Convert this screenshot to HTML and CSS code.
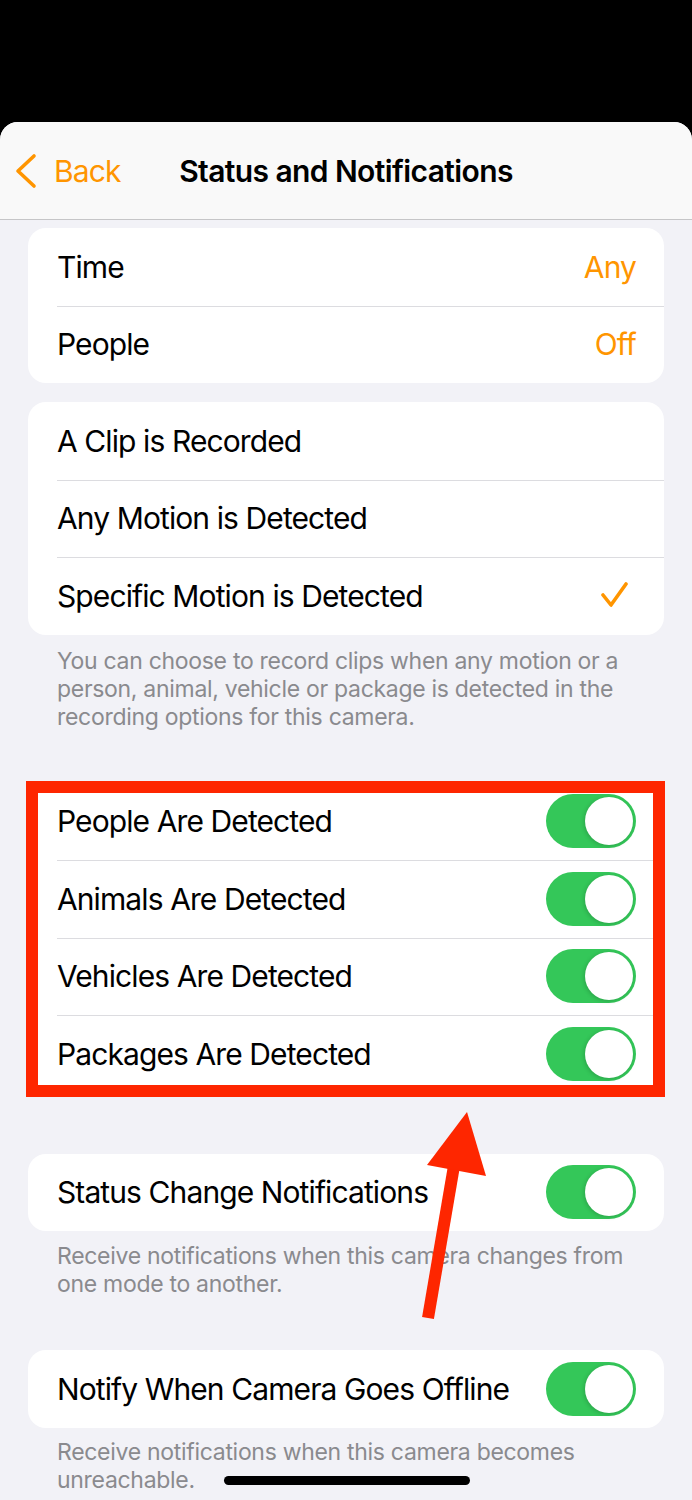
FILE: index.html
```html
<!DOCTYPE html>
<html lang="en">
<head>
<meta charset="utf-8">
<title>Status and Notifications</title>
<link rel="stylesheet" href="styles.css">
</head>
<body>
<div class="status-area"></div>
<div class="sheet">
  <header class="navbar">
    <a class="back" href="#">
      <svg class="chevron" width="24" height="36" viewBox="0 0 24 36"><path d="M20 3 L4 18 L20 33" fill="none" stroke="#ff9500" stroke-width="3.6" stroke-linecap="round" stroke-linejoin="round"/></svg>
      <span>Back</span>
    </a>
    <h1 class="title">Status and Notifications</h1>
    <div class="spacer"></div>
  </header>

  <main class="content">
    <section class="group g1">
      <div class="row"><span class="label">Time</span><span class="value">Any</span></div>
      <div class="row"><span class="label">People</span><span class="value">Off</span></div>
    </section>

    <section class="group g2">
      <div class="row"><span class="label">A Clip is Recorded</span></div>
      <div class="row"><span class="label">Any Motion is Detected</span></div>
      <div class="row"><span class="label">Specific Motion is Detected</span>
        <svg class="check" width="30" height="28" viewBox="0 0 30 28"><path d="M3 13 L11 23 L26 2" fill="none" stroke="#ff9500" stroke-width="3.6" stroke-linecap="round" stroke-linejoin="round"/></svg>
      </div>
    </section>
    <p class="footer f2">You can choose to record clips when any motion or a person, animal, vehicle or package is detected in the recording options for this camera.</p>

    <section class="group g3">
      <div class="row"><span class="label">People Are Detected</span><span class="toggle"><span class="knob"></span></span></div>
      <div class="row"><span class="label">Animals Are Detected</span><span class="toggle"><span class="knob"></span></span></div>
      <div class="row"><span class="label">Vehicles Are Detected</span><span class="toggle"><span class="knob"></span></span></div>
      <div class="row"><span class="label">Packages Are Detected</span><span class="toggle"><span class="knob"></span></span></div>
    </section>

    <section class="group g4">
      <div class="row"><span class="label">Status Change Notifications</span><span class="toggle"><span class="knob"></span></span></div>
    </section>
    <p class="footer f4">Receive notifications when this camera changes from one mode to another.</p>

    <section class="group g5">
      <div class="row"><span class="label">Notify When Camera Goes Offline</span><span class="toggle"><span class="knob"></span></span></div>
    </section>
    <p class="footer f5">Receive notifications when this camera becomes unreachable.</p>
  </main>

  <div class="highlight-box"></div>
  <svg class="arrow" width="692" height="1500" viewBox="0 0 692 1500">
    <line x1="455" y1="1160" x2="428" y2="1318" stroke="#fe2600" stroke-width="12"/>
    <polygon points="467,1112 427,1165 486,1176" fill="#fe2600"/>
  </svg>
  <div class="home-indicator"></div>
</div>
</body>
</html>
```
FILE: styles.css
```css
* { box-sizing: border-box; }
html, body { margin: 0; padding: 0; }
body {
  background: #000;
  font-family: Inter, "Noto Sans", sans-serif;
  width: 692px;
  height: 1500px;
  overflow: hidden;
  position: relative;
}
.status-area { height: 122px; background: #000; }
.sheet {
  background: #f2f2f7;
  border-radius: 18px 18px 0 0;
  height: 1378px;
  overflow: hidden;
}
.navbar {
  height: 98px;
  background: #f9f9f9;
  border-bottom: 1px solid #c6c6c8;
  display: grid;
  grid-template-columns: 1fr auto 1fr;
  align-items: center;
}
.back {
  display: flex;
  align-items: center;
  color: #ff9500;
  text-decoration: none;
  font-size: 30px;
  letter-spacing: -0.9px;
  padding-left: 14px;
}
.back .chevron { margin-right: 16px; }
.title {
  margin: 0;
  font-size: 30px;
  font-weight: 600;
  letter-spacing: -0.6px;
  color: #000;
}
.content { padding: 8px 28px 0; }
.group {
  background: #fff;
  border-radius: 18px;
}
.g2 { margin-top: 19px; }
.g3 { margin-top: 52px; }
.g4 { margin-top: 61px; }
.g5 { margin-top: 52px; }
.row {
  height: 77.5px;
  display: flex;
  align-items: center;
  justify-content: space-between;
  padding: 0 28px 0 29px;
  position: relative;
}
.row + .row::before {
  content: "";
  position: absolute;
  top: 0;
  left: 29px;
  right: 0;
  height: 1px;
  background: #dcdce0;
}
.label {
  font-size: 30px;
  letter-spacing: -0.9px;
  color: #000;
}
.value {
  font-size: 30px;
  letter-spacing: -0.9px;
  color: #ff9500;
}
.check { margin-right: 6px; }
.toggle {
  width: 90px;
  height: 54px;
  border-radius: 27px;
  background: #34c759;
  display: flex;
  align-items: center;
  justify-content: flex-end;
  padding-right: 3px;
}
.knob {
  width: 48px;
  height: 48px;
  border-radius: 50%;
  background: #fff;
  box-shadow: -1px 1px 4px rgba(0,0,0,0.18);
}
.footer {
  margin: 0;
  padding: 11px 29px 0;
  font-size: 23px;
  line-height: 28px;
  color: #8a8a8e;
  letter-spacing: -0.3px;
}
.f2 { padding-top: 12px; }
.f5 { padding-top: 10px; }
.highlight-box {
  position: absolute;
  left: 26px;
  top: 781px;
  width: 639px;
  height: 316px;
  border: 12px solid #fe2600;
}
.arrow {
  position: absolute;
  left: 0;
  top: 0;
  pointer-events: none;
}
.home-indicator {
  position: absolute;
  left: 224px;
  top: 1476px;
  width: 246px;
  height: 9px;
  border-radius: 5px;
  background: #000;
}
```
